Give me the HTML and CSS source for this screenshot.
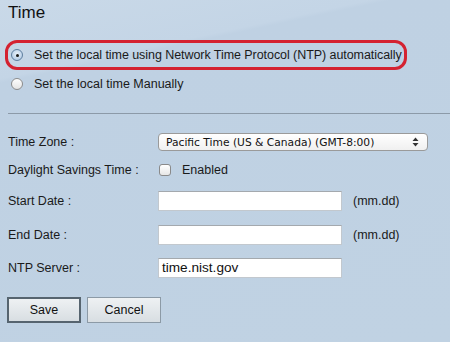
FILE: index.html
```html
<!DOCTYPE html>
<html>
<head>
<meta charset="utf-8">
<link rel="stylesheet" href="styles.css">
</head>
<body>
<div class="page">
  <h1 class="title">Time</h1>
  <div class="ntp-box">
    <div class="radio-row">
      <span class="radio checked"></span>
      <span class="radio-label tight">Set the local time using Network Time Protocol (NTP) automatically</span>
    </div>
  </div>
  <div class="radio-row manual">
    <span class="radio"></span>
    <span class="radio-label">Set the local time Manually</span>
  </div>
  <div class="divider"></div>
  <div class="form">
    <div class="label">Time Zone :</div>
    <div class="control">
      <div class="select">
        <span class="select-text">Pacific Time (US &amp; Canada) (GMT-8:00)</span>
        <svg class="select-arrows" width="7" height="10" viewBox="0 0 7 10"><path d="M0.5 4 L3.5 0.5 L6.5 4 Z M0.5 6 L3.5 9.5 L6.5 6 Z" fill="#333"/></svg>
      </div>
    </div>
    <div class="label">Daylight Savings Time :</div>
    <div class="control">
      <span class="checkbox"></span>
      <span class="check-label">Enabled</span>
    </div>
    <div class="label">Start Date :</div>
    <div class="control">
      <div class="input"></div>
      <span class="hint">(mm.dd)</span>
    </div>
    <div class="label">End Date :</div>
    <div class="control">
      <div class="input"></div>
      <span class="hint">(mm.dd)</span>
    </div>
    <div class="label">NTP Server :</div>
    <div class="control">
      <div class="input">time.nist.gov</div>
    </div>
  </div>
  <div class="buttons">
    <div class="button focused">Save</div>
    <div class="button">Cancel</div>
  </div>
</div>
</body>
</html>
```

FILE: styles.css
```css
html, body {
  margin: 0;
  padding: 0;
}
body {
  width: 450px;
  height: 342px;
  overflow: hidden;
  background: linear-gradient(168deg, #c9d9e8 0%, #c4d5e6 18%, #bfd1e3 19%, #c0d2e3 100%);
  font-family: "Liberation Sans", Arial, sans-serif;
  font-size: 12.5px;
  color: #1a1a1a;
}
.page {
  padding: 0 0 0 8px;
}
.title {
  margin: 0;
  padding-top: 3px;
  height: 37px;
  font-size: 17px;
  font-weight: normal;
  line-height: 20px;
  color: #111;
}
.ntp-box {
  margin-left: -3px;
  width: 396px;
  height: 24px;
  border: 3px solid #d42231;
  border-radius: 12px;
  display: flex;
  align-items: center;
}
.radio-row {
  display: flex;
  align-items: center;
  height: 20px;
}
.radio-row.manual {
  margin-top: 4px;
}
.radio {
  width: 12px;
  height: 12px;
  border-radius: 50%;
  border: 1px solid #8c8c8c;
  background: linear-gradient(#fdfdfd, #e4e4e4);
  box-sizing: border-box;
  margin-left: 3px;
  margin-right: 11px;
  position: relative;
  flex: none;
}
.radio.checked {
  border-color: #5f7f9f;
  background: radial-gradient(circle at 50% 40%, #eaf2fa 0%, #b9d0e8 70%, #9fbcdc 100%);
}
.radio.checked::after {
  content: "";
  position: absolute;
  left: 3.5px;
  top: 3.5px;
  width: 3px;
  height: 3px;
  border-radius: 50%;
  background: #1a1a1a;
}
.radio-label {
  white-space: nowrap;
}
.radio-label.tight {
  letter-spacing: -0.06px;
}
.divider {
  margin-top: 19px;
  height: 1px;
  background: #8c9aa8;
}
.form {
  margin-top: 14px;
  display: grid;
  grid-template-columns: 150px 1fr;
  grid-template-rows: 28px 28px 34px 34px 32px;
  align-items: center;
}
.label {
  white-space: nowrap;
}
.control {
  display: flex;
  align-items: center;
}
.select {
  width: 270px;
  height: 18px;
  box-sizing: border-box;
  border: 1px solid #9a9a9a;
  border-radius: 4px;
  background: linear-gradient(#ffffff, #f0f0f0);
  display: flex;
  align-items: center;
  justify-content: space-between;
  padding: 0 8px 0 7px;
  font-family: "DejaVu Sans", sans-serif;
  font-size: 10.7px;
  color: #111;
}
.select-text {
  white-space: nowrap;
}
.checkbox {
  width: 12px;
  height: 12px;
  box-sizing: border-box;
  border: 1px solid #8a8a8a;
  border-radius: 3px;
  background: linear-gradient(#ffffff, #e6e6e6);
  margin-left: 1px;
  margin-right: 11px;
}
.input {
  width: 184px;
  height: 20px;
  box-sizing: border-box;
  background: #fff;
  border: 1px solid #c2c8ce;
  border-top-color: #a4a9ae;
  padding-left: 3px;
  line-height: 18px;
  font-size: 13.6px;
  color: #111;
}
.hint {
  margin-left: 11px;
}
.buttons {
  margin-top: 13px;
  margin-left: -1px;
  display: flex;
  gap: 6px;
}
.button {
  width: 74px;
  height: 26px;
  box-sizing: border-box;
  border: 1px solid #8c9aa6;
  background: linear-gradient(#eef1f3, #d8dee2);
  display: flex;
  align-items: center;
  justify-content: center;
  color: #111;
}
.button.focused {
  border: 2px solid #56646f;
}
```
